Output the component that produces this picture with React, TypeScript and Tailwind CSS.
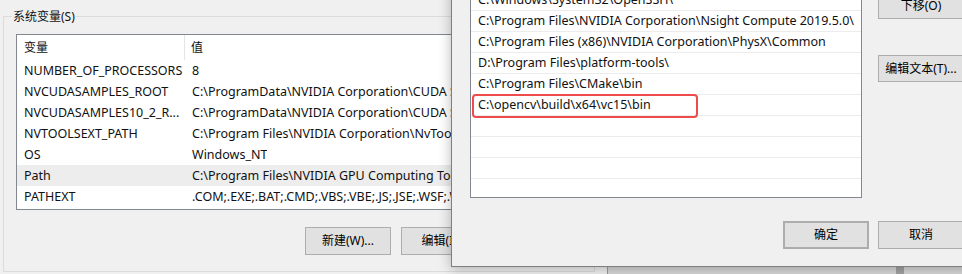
import React from "react";

const envRows: [string, string][] = [
  ["NUMBER_OF_PROCESSORS", "8"],
  ["NVCUDASAMPLES_ROOT", "C:\\ProgramData\\NVIDIA Corporation\\CUDA Samples\\v10.2"],
  ["NVCUDASAMPLES10_2_R...", "C:\\ProgramData\\NVIDIA Corporation\\CUDA Samples\\v10.2"],
  ["NVTOOLSEXT_PATH", "C:\\Program Files\\NVIDIA Corporation\\NvToolsExt\\"],
  ["OS", "Windows_NT"],
  ["Path", "C:\\Program Files\\NVIDIA GPU Computing Toolkit\\CUDA\\v10.2\\bin;"],
  ["PATHEXT", ".COM;.EXE;.BAT;.CMD;.VBS;.VBE;.JS;.JSE;.WSF;.WSH;.MSC"],
];

const pathRows: string[] = [
  "C:\\Program Files\\NVIDIA GPU Computing Toolkit\\CUDA\\v10.2\\libnvvp",
  "C:\\Windows\\System32\\Wbem",
  "C:\\Windows\\System32\\OpenSSH\\",
  "C:\\Program Files\\NVIDIA Corporation\\Nsight Compute 2019.5.0\\",
  "C:\\Program Files (x86)\\NVIDIA Corporation\\PhysX\\Common",
  "D:\\Program Files\\platform-tools\\",
  "C:\\Program Files\\CMake\\bin",
  "C:\\opencv\\build\\x64\\vc15\\bin",
  "",
  "",
  "",
];

function Btn({ children, className = "" }: { children: React.ReactNode; className?: string }) {
  return (
    <div
      className={
        "flex items-center justify-center w-[86px] bg-[#e1e1e1] border border-[#adadad] text-black whitespace-nowrap " +
        className
      }
    >
      {children}
    </div>
  );
}

export default function App() {
  return (
    <div className="relative w-[962px] h-[274px] overflow-hidden bg-[#d8d8d8] font-['Noto_Sans','Noto_Sans_CJK_SC',sans-serif] text-[12px] leading-[16px] text-[#111]">
      {/* background window: 环境变量 */}
      <div className="absolute left-0 top-0 w-[608px] h-[290px] bg-[#f0f0f0] border-r border-[#9c9c9c] pt-[16px] pl-[3px]">
        <div className="relative w-[592px] h-[256px] border border-[#dcdcdc] pl-[12px] pr-[11px] pt-[17px] flex flex-col">
          <span className="absolute left-[8px] top-[-9px] bg-[#f0f0f0] px-[1px] leading-[17px]">系统变量(S)</span>
          <div className="h-[176px] w-[567px] border border-[#828790] bg-white flex flex-col overflow-hidden">
            <div className="h-[25px] flex items-center shrink-0">
              <div className="w-[168px] h-full pl-[7px] flex items-center border-r border-[#e5e5e5]">变量</div>
              <div className="pl-[6px]">值</div>
            </div>
            {envRows.map(([k, v], i) => (
              <div
                key={k}
                className={
                  "h-[21px] shrink-0 flex items-center whitespace-nowrap text-[12.5px] " +
                  (i === 5 ? "bg-[#ededed]" : "")
                }
              >
                <div className="w-[168px] pl-[7px] overflow-hidden">{k}</div>
                <div className="pl-[7px] overflow-hidden">{v}</div>
              </div>
            ))}
          </div>
          <div className="flex justify-end gap-[10px] mt-[17px]">
            <Btn className="h-[28px] w-[85px]">新建(W)...</Btn>
            <Btn className="h-[28px] w-[85px]">编辑(I)...</Btn>
            <Btn className="h-[28px] w-[85px]">删除(L)</Btn>
          </div>
        </div>
      </div>

      {/* lower background pieces */}
      <div className="absolute left-[896px] top-[255px] w-[8px] h-[20px] bg-[#a3a3a3]" />

      {/* foreground dialog: 编辑环境变量 */}
      <div className="absolute left-[451px] top-[-60px] w-[531px] bg-[#f0f0f0] border border-[#7f7f7f] shadow-[0_2px_12px_rgba(0,0,0,0.28)] pt-[6px] pl-[18px] pr-[17px] pb-[17px] flex flex-col">
        <div className="flex gap-[16px] items-start">
          <div className="w-[392px] h-[251px] border border-[#828790] bg-white flex flex-col overflow-hidden">
            {pathRows.map((p, i) => (
              <div
                key={i}
                className="relative h-[21px] shrink-0 border-b border-[#ececec] flex items-center pl-[7px] whitespace-nowrap text-[12.5px]"
              >
                {p}
                {i === 7 && (
                  <div className="absolute left-[1px] top-[-1px] w-[226px] h-[24px] border-2 border-[#ee4b4b] rounded-[4px]" />
                )}
              </div>
            ))}
          </div>
          <div className="flex flex-col">
            <Btn className="h-[27px] mt-[45px]">下移(O)</Btn>
            <Btn className="h-[27px] mt-[36px]">编辑文本(T)...</Btn>
          </div>
        </div>
        <div className="flex justify-end gap-[9px] mt-[23px]">
          <Btn className="h-[28px] border-2 border-[#0078d7]">确定</Btn>
          <Btn className="h-[28px]">取消</Btn>
        </div>
      </div>
    </div>
  );
}
